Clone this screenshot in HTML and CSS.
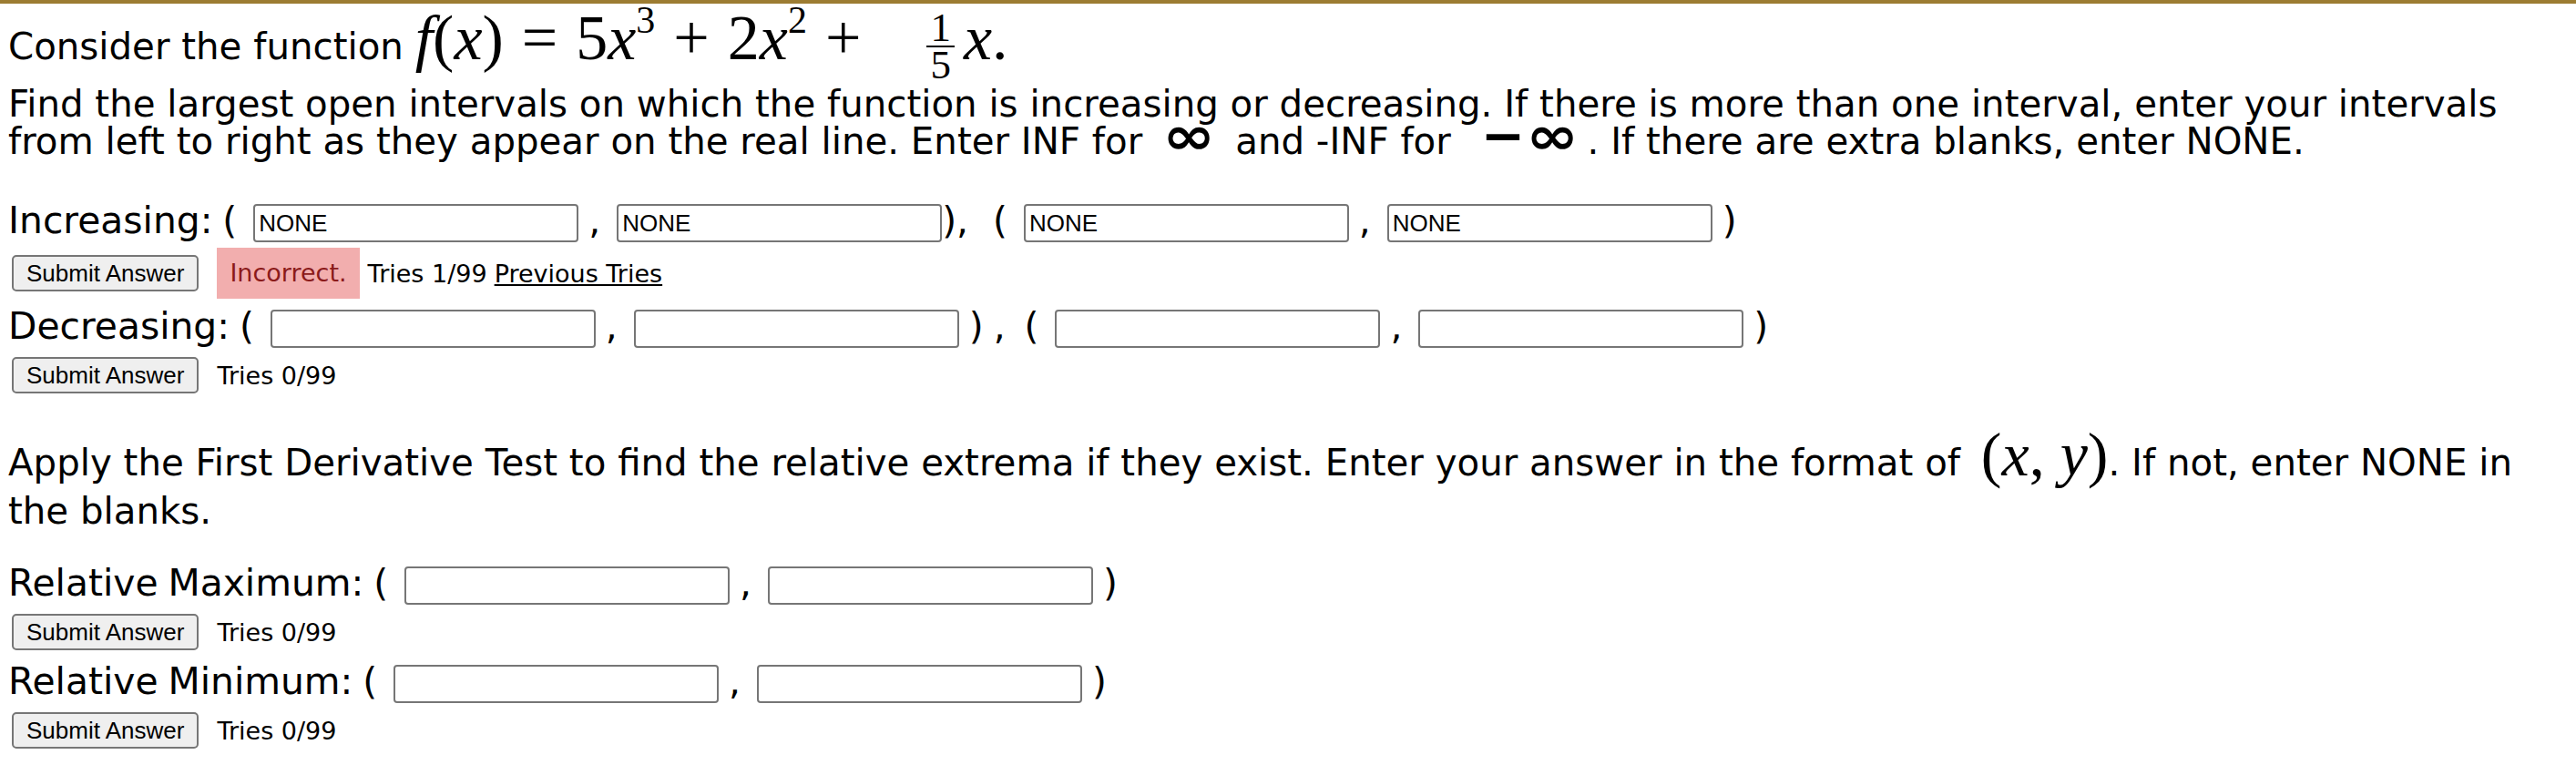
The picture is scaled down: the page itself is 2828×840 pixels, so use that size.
FILE: index.html
```html
<html>
<head>
    <link rel="stylesheet" href="styles.css">
</head>
<body>
    <div class="topbar"></div>
    <div class="question">
        <p class="intro">Consider the function <span class="math"><i>f</i>(<i>x</i>)<span class="op">=</span>5<i>x</i><sup>3</sup><span class="op">+</span>2<i>x</i><sup>2</sup><span class="op">+</span><span class="frac"><span class="num">1</span><span class="den">5</span></span><i>x</i>.</span></p>
        <p class="prompt">Find the largest open intervals on which the function is increasing or decreasing. If there is more than one interval, enter your intervals from left to right as they appear on the real line. Enter INF for <span class="sym">∞</span> and -INF for <span class="minus">−</span><span class="sym tight">∞</span>. If there are extra blanks, enter NONE.</p>

        <div class="answer-row">Increasing: ( <input type="text" value="NONE"> , <input type="text" value="NONE">), <span class="gap"></span>( <input type="text" value="NONE"> , <input type="text" value="NONE"> )</div>
        <div class="submit-row has-feedback">
            <button class="submit">Submit Answer</button><span class="feedback incorrect">Incorrect.</span><span class="tries">Tries 1/99</span> <a href="#" class="prev">Previous Tries</a>
        </div>

        <div class="answer-row">Decreasing: ( <input type="text"> , <input type="text"> ) , <span class="gap narrow"></span>( <input type="text"> , <input type="text"> )</div>
        <div class="submit-row">
            <button class="submit">Submit Answer</button><span class="tries">Tries 0/99</span>
        </div>

        <p class="prompt extrema">Apply the First Derivative Test to find the relative extrema if they exist. Enter your answer in the format of <span class="math big">(<i>x</i>, <i>y</i>)</span>. If not, enter NONE in the blanks.</p>

        <div class="answer-row">Relative Maximum: ( <input type="text"> , <input type="text"> )</div>
        <div class="submit-row">
            <button class="submit">Submit Answer</button><span class="tries">Tries 0/99</span>
        </div>

        <div class="answer-row">Relative Minimum: ( <input type="text"> , <input type="text"> )</div>
        <div class="submit-row">
            <button class="submit">Submit Answer</button><span class="tries">Tries 0/99</span>
        </div>
    </div>
</body>
</html>
```

FILE: styles.css
```css
body {
    margin: 0;
    font-family: "DejaVu Sans", Verdana, sans-serif;
    color: #000;
    background-color: #fff;
}
.topbar {
    height: 4px;
    background-color: #9c7c32;
}
.question {
    padding: 0 30px 0 9px;
    font-size: 40.3px;
}
.intro {
    margin: 0;
    padding-top: 6px;
    line-height: 84px;
    white-space: nowrap;
}
.math {
    font-family: "Liberation Serif", "Times New Roman", serif;
    font-size: 70px;
    line-height: 0;
}
.math .op {
    margin: 0 20px;
}
.math sup {
    font-size: 42px;
    vertical-align: 29px;
    line-height: 0;
}
.frac {
    display: inline-flex;
    flex-direction: column;
    align-items: center;
    vertical-align: 20px;
    font-size: 45px;
    line-height: 39px;
    margin: 0 10px 0 52px;
}
.frac .num {
    border-bottom: 2px solid #000;
    padding: 0 4px;
}
.math.big {
    font-size: 68px;
    margin-left: 10px;
}
.prompt {
    margin: 0 0 38px;
    line-height: 41px;
}
.prompt.extrema {
    margin: 44px 0 24px;
    line-height: 53px;
}
.sym {
    display: inline-block;
    font-weight: bold;
    font-size: 58px;
    line-height: 0;
    transform: scaleX(1.2);
    margin: 0 14px;
}
.sym.tight {
    margin-left: 6px;
}
.minus {
    font-weight: bold;
    font-size: 58px;
    line-height: 0;
    margin-left: 20px;
}
.answer-row {
    height: 56px;
    line-height: 56px;
    font-size: 40.8px;
    word-spacing: -2px;
    white-space: nowrap;
}
.answer-row input {
    vertical-align: middle;
    width: 357px;
    height: 42px;
    box-sizing: border-box;
    margin: 0 0 0 7px;
    padding: 0 4px;
    border: 2px solid #767676;
    border-radius: 4px;
    font-family: "Liberation Sans", Arial, sans-serif;
    font-size: 26px;
    word-spacing: 0;
    color: #000;
}
.gap {
    display: inline-block;
    width: 16px;
}
.gap.narrow {
    width: 10px;
}
.submit-row {
    height: 52px;
    display: flex;
    align-items: center;
    font-size: 27px;
}
.submit-row.has-feedback {
    height: 60px;
}
.submit {
    height: 40px;
    padding: 0 14px;
    margin-left: 4px;
    margin-right: 20px;
    background-color: #efefef;
    border: 2px solid #767676;
    border-radius: 5px;
    font-family: "Liberation Sans", Arial, sans-serif;
    font-size: 26px;
    color: #000;
}
.feedback {
    padding: 12px 14px 13px;
    margin-right: 9px;
}
.feedback.incorrect {
    background-color: #f2aeae;
    color: #8b1a1a;
}
.prev {
    color: #000;
    margin-left: 8px;
}
```
